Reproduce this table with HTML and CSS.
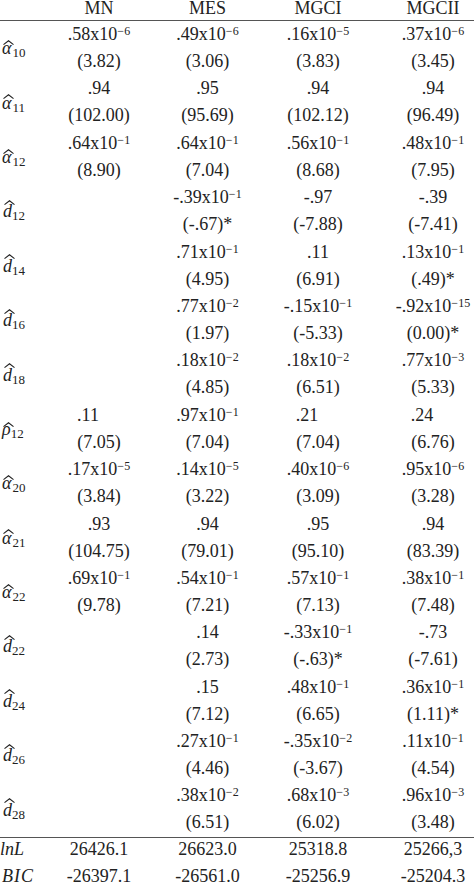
FILE: index.html
```html
<!DOCTYPE html>
<html>
<head>
<meta charset="utf-8">
<link rel="stylesheet" href="styles.css">
</head>
<body>
<div class="table">
  <div class="head">
    <div></div><div>MN</div><div>MES</div><div>MGCI</div><div>MGCII</div>
  </div>
  <div class="body">
    <div class="block">
      <div class="lab"><span class="base a">α<svg class="hat" viewBox="0 0 11 5"><path d="M0.5 4.6 L5.5 0.7 L10.5 4.6"/></svg></span><sub>10</sub></div>
      <div>.58x10<sup>−6</sup></div><div>.49x10<sup>−6</sup></div><div>.16x10<sup>−5</sup></div><div>.37x10<sup>−6</sup></div>
      <div>(3.82)</div><div>(3.06)</div><div>(3.83)</div><div>(3.45)</div>
    </div>
    <div class="block">
      <div class="lab"><span class="base a">α<svg class="hat" viewBox="0 0 11 5"><path d="M0.5 4.6 L5.5 0.7 L10.5 4.6"/></svg></span><sub>11</sub></div>
      <div>.94</div><div>.95</div><div>.94</div><div>.94</div>
      <div>(102.00)</div><div>(95.69)</div><div>(102.12)</div><div>(96.49)</div>
    </div>
    <div class="block">
      <div class="lab"><span class="base a">α<svg class="hat" viewBox="0 0 11 5"><path d="M0.5 4.6 L5.5 0.7 L10.5 4.6"/></svg></span><sub>12</sub></div>
      <div>.64x10<sup>−1</sup></div><div>.64x10<sup>−1</sup></div><div>.56x10<sup>−1</sup></div><div>.48x10<sup>−1</sup></div>
      <div>(8.90)</div><div>(7.04)</div><div>(8.68)</div><div>(7.95)</div>
    </div>
    <div class="block">
      <div class="lab"><span class="base d">d<svg class="hat" viewBox="0 0 11 5"><path d="M0.5 4.6 L5.5 0.7 L10.5 4.6"/></svg></span><sub>12</sub></div>
      <div></div><div>-.39x10<sup>−1</sup></div><div>-.97</div><div>-.39</div>
      <div></div><div>(-.67)*</div><div>(-7.88)</div><div>(-7.41)</div>
    </div>
    <div class="block">
      <div class="lab"><span class="base d">d<svg class="hat" viewBox="0 0 11 5"><path d="M0.5 4.6 L5.5 0.7 L10.5 4.6"/></svg></span><sub>14</sub></div>
      <div></div><div>.71x10<sup>−1</sup></div><div>.11</div><div>.13x10<sup>−1</sup></div>
      <div></div><div>(4.95)</div><div>(6.91)</div><div>(.49)*</div>
    </div>
    <div class="block">
      <div class="lab"><span class="base d">d<svg class="hat" viewBox="0 0 11 5"><path d="M0.5 4.6 L5.5 0.7 L10.5 4.6"/></svg></span><sub>16</sub></div>
      <div></div><div>.77x10<sup>−2</sup></div><div>-.15x10<sup>−1</sup></div><div>-.92x10<sup>−15</sup></div>
      <div></div><div>(1.97)</div><div>(-5.33)</div><div>(0.00)*</div>
    </div>
    <div class="block">
      <div class="lab"><span class="base d">d<svg class="hat" viewBox="0 0 11 5"><path d="M0.5 4.6 L5.5 0.7 L10.5 4.6"/></svg></span><sub>18</sub></div>
      <div></div><div>.18x10<sup>−2</sup></div><div>.18x10<sup>−2</sup></div><div>.77x10<sup>−3</sup></div>
      <div></div><div>(4.85)</div><div>(6.51)</div><div>(5.33)</div>
    </div>
    <div class="block">
      <div class="lab"><span class="base r">ρ<svg class="hat" viewBox="0 0 11 5"><path d="M0.5 4.6 L5.5 0.7 L10.5 4.6"/></svg></span><sub>12</sub></div>
      <div class="lft">.11</div><div>.97x10<sup>−1</sup></div><div class="lft">.21</div><div class="lft">.24</div>
      <div>(7.05)</div><div>(7.04)</div><div>(7.04)</div><div>(6.76)</div>
    </div>
    <div class="block">
      <div class="lab"><span class="base a">α<svg class="hat" viewBox="0 0 11 5"><path d="M0.5 4.6 L5.5 0.7 L10.5 4.6"/></svg></span><sub>20</sub></div>
      <div>.17x10<sup>−5</sup></div><div>.14x10<sup>−5</sup></div><div>.40x10<sup>−6</sup></div><div>.95x10<sup>−6</sup></div>
      <div>(3.84)</div><div>(3.22)</div><div>(3.09)</div><div>(3.28)</div>
    </div>
    <div class="block">
      <div class="lab"><span class="base a">α<svg class="hat" viewBox="0 0 11 5"><path d="M0.5 4.6 L5.5 0.7 L10.5 4.6"/></svg></span><sub>21</sub></div>
      <div>.93</div><div>.94</div><div>.95</div><div>.94</div>
      <div>(104.75)</div><div>(79.01)</div><div>(95.10)</div><div>(83.39)</div>
    </div>
    <div class="block">
      <div class="lab"><span class="base a">α<svg class="hat" viewBox="0 0 11 5"><path d="M0.5 4.6 L5.5 0.7 L10.5 4.6"/></svg></span><sub>22</sub></div>
      <div>.69x10<sup>−1</sup></div><div>.54x10<sup>−1</sup></div><div>.57x10<sup>−1</sup></div><div>.38x10<sup>−1</sup></div>
      <div>(9.78)</div><div>(7.21)</div><div>(7.13)</div><div>(7.48)</div>
    </div>
    <div class="block">
      <div class="lab"><span class="base d">d<svg class="hat" viewBox="0 0 11 5"><path d="M0.5 4.6 L5.5 0.7 L10.5 4.6"/></svg></span><sub>22</sub></div>
      <div></div><div>.14</div><div>-.33x10<sup>−1</sup></div><div>-.73</div>
      <div></div><div>(2.73)</div><div>(-.63)*</div><div>(-7.61)</div>
    </div>
    <div class="block">
      <div class="lab"><span class="base d">d<svg class="hat" viewBox="0 0 11 5"><path d="M0.5 4.6 L5.5 0.7 L10.5 4.6"/></svg></span><sub>24</sub></div>
      <div></div><div>.15</div><div>.48x10<sup>−1</sup></div><div>.36x10<sup>−1</sup></div>
      <div></div><div>(7.12)</div><div>(6.65)</div><div>(1.11)*</div>
    </div>
    <div class="block">
      <div class="lab"><span class="base d">d<svg class="hat" viewBox="0 0 11 5"><path d="M0.5 4.6 L5.5 0.7 L10.5 4.6"/></svg></span><sub>26</sub></div>
      <div></div><div>.27x10<sup>−1</sup></div><div>-.35x10<sup>−2</sup></div><div>.11x10<sup>−1</sup></div>
      <div></div><div>(4.46)</div><div>(-3.67)</div><div>(4.54)</div>
    </div>
    <div class="block">
      <div class="lab"><span class="base d">d<svg class="hat" viewBox="0 0 11 5"><path d="M0.5 4.6 L5.5 0.7 L10.5 4.6"/></svg></span><sub>28</sub></div>
      <div></div><div>.38x10<sup>−2</sup></div><div>.68x10<sup>−3</sup></div><div>.96x10<sup>−3</sup></div>
      <div></div><div>(6.51)</div><div>(6.02)</div><div>(3.48)</div>
    </div>
  </div>
  <div class="foot">
    <div class="frow r1">
      <div class="flab ln">lnL</div><div>26426.1</div><div>26623.0</div><div>25318.8</div><div>25266,3</div>
    </div>
    <div class="frow r2">
      <div class="flab bic">BIC</div><div>-26397.1</div><div>-26561.0</div><div>-25256.9</div><div>-25204.3</div>
    </div>
  </div>
</div>
</body>
</html>
```

FILE: styles.css
```css
html, body {
  margin: 0;
  padding: 0;
  background: #ffffff;
  overflow: hidden;
}

body {
  width: 474px;
  height: 887px;
}

.table {
  width: 492px;
  font-family: "Liberation Serif", "DejaVu Serif", serif;
  font-size: 18px;
  color: #222222;
}

.head,
.block,
.frow {
  display: grid;
  grid-template-columns: 45px 108px 109px 112px 118px;
  text-align: center;
}

.head {
  height: 20px;
  line-height: 16px;
  align-items: start;
}

.body {
  border-top: 1.5px solid #555555;
}

.block {
  grid-template-rows: 26px 28.4px;
  line-height: 26px;
}

.block > div:nth-child(n+6) {
  line-height: 28.4px;
}

.lab {
  grid-row: 1 / span 2;
  align-self: center;
  text-align: left;
  padding-left: 2px;
  line-height: 18px;
  white-space: nowrap;
}

.base {
  position: relative;
  display: inline-block;
  font-style: italic;
  line-height: 18px;
}

.base.a { padding-right: 1px; }
.base.d { padding-left: 1px; }

.hat {
  position: absolute;
  left: 0;
  width: 11px;
  height: 5px;
  overflow: visible;
}

.hat path {
  fill: none;
  stroke: #222222;
  stroke-width: 1.1;
  stroke-linejoin: miter;
}

.a .hat { top: 0.7px; left: 1px; }
.d .hat { top: -2.5px; left: 2px; }
.r .hat { top: 1.7px; left: 1px; }

sub {
  font-size: 13px;
  vertical-align: -3px;
  line-height: 0;
  font-style: normal;
}

sup {
  font-size: 12px;
  vertical-align: 5.5px;
  line-height: 0;
}

.lft {
  padding-right: 22px;
}

.foot {
  border-top: 1.5px solid #555555;
}

.r1 {
  line-height: 22px;
}

.r2 {
  line-height: 32px;
}

.flab {
  text-align: left;
  font-style: italic;
  white-space: nowrap;
}

.ln {
  padding-left: 0;
}

.bic {
  padding-left: 2px;
  letter-spacing: 1px;
}
```
